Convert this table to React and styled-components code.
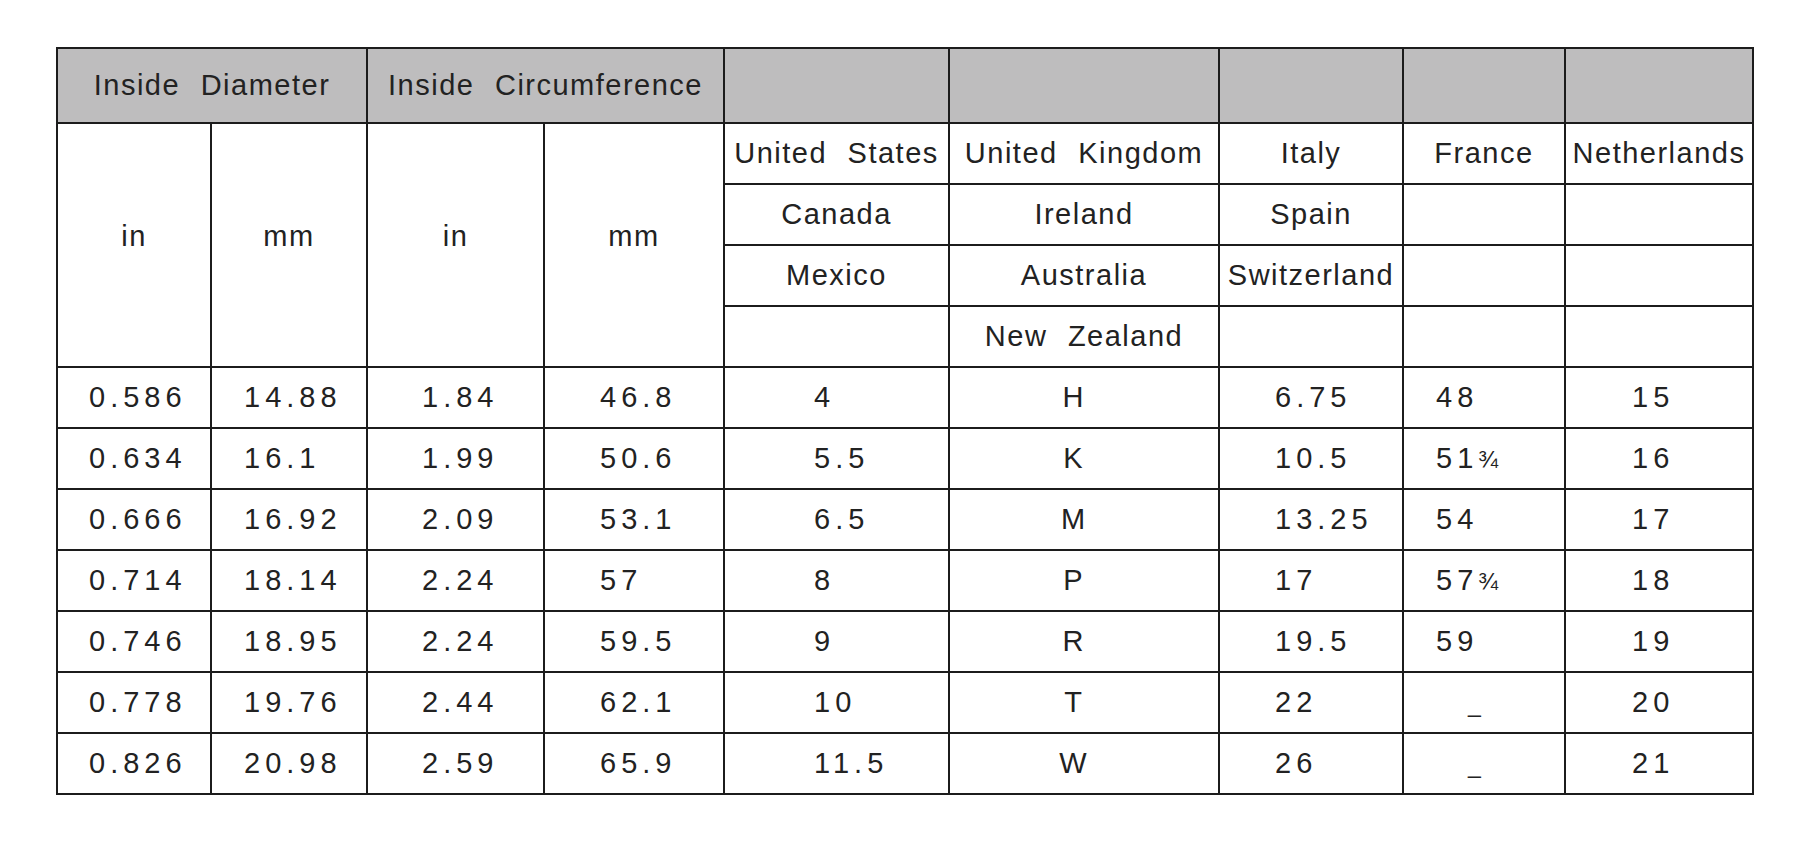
import React from "react";
import styled, { createGlobalStyle } from "styled-components";

const GlobalStyle = createGlobalStyle`
    html, body {
        margin: 0;
        padding: 0;
        background: #ffffff;
    }

    body {
        font-family: "Liberation Sans", Arial, sans-serif;
        color: #222;
    }
`

const Page = styled.div`
    padding: 47px 0 0 56px;
`

const SizeTable = styled.table`
    width: 1696px;
    table-layout: fixed;
    border-collapse: collapse;
    font-size: 29px;
    color: #222;

    td {
        border: 2px solid #1c1c1c;
        padding: 0;
        white-space: nowrap;
        overflow: hidden;
    }
`

const TopRow = styled.tr`
    height: 75px;
`

const Row = styled.tr`
    height: 61px;
`

const HeadCell = styled.td`
    background-color: #bebdbe;
    text-align: center;
    letter-spacing: 1.5px;
    word-spacing: 11px;
`

const UnitCell = styled.td`
    text-align: center;
    vertical-align: middle;
    padding-bottom: 18px !important;
    letter-spacing: 1.5px;
`

const RegionCell = styled.td`
    text-align: center;
    letter-spacing: 1.5px;
    word-spacing: 11px;
`

const DataCell = styled.td`
    text-align: ${(p) => (p.$center ? "center" : "left")};
    padding-left: ${(p) => (p.$center ? 0 : p.$pad)}px !important;
    padding-right: ${(p) => (p.$center ? p.$pad : 0)}px !important;
    letter-spacing: 5px;
`

const Frac = styled.span`
    font-size: 0.82em;
    letter-spacing: 0;
`

const Dash = styled.span`
    display: inline-block;
    margin-left: 32px;
    font-size: 23px;
    letter-spacing: 0;
`

const widths = [154, 156, 177, 180, 225, 270, 184, 162, 188];
const pads = [31, 32, 54, 55, 89, 17, 55, 32, 66];

const regions = [
    ["United States", "United Kingdom", "Italy", "France", "Netherlands"],
    ["Canada", "Ireland", "Spain", "", ""],
    ["Mexico", "Australia", "Switzerland", "", ""],
    ["", "New Zealand", "", "", ""],
];

const rows = [
    ["0.586", "14.88", "1.84", "46.8", "4", "H", "6.75", "48", "15"],
    ["0.634", "16.1", "1.99", "50.6", "5.5", "K", "10.5", "51¾", "16"],
    ["0.666", "16.92", "2.09", "53.1", "6.5", "M", "13.25", "54", "17"],
    ["0.714", "18.14", "2.24", "57", "8", "P", "17", "57¾", "18"],
    ["0.746", "18.95", "2.24", "59.5", "9", "R", "19.5", "59", "19"],
    ["0.778", "19.76", "2.44", "62.1", "10", "T", "22", "-", "20"],
    ["0.826", "20.98", "2.59", "65.9", "11.5", "W", "26", "-", "21"],
];

function renderValue(value) {
    if (value === "-") {
        return <Dash>_</Dash>;
    }
    if (value.endsWith("¾")) {
        return (
            <>
                {value.slice(0, -1)}
                <Frac>¾</Frac>
            </>
        );
    }
    return value;
}

export default function App() {
    return (
        <>
            <GlobalStyle />
            <Page>
                <SizeTable>
                    <colgroup>
                        {widths.map((w, i) => (
                            <col key={i} style={{ width: w }} />
                        ))}
                    </colgroup>
                    <tbody>
                        <TopRow>
                            <HeadCell colSpan={2}>Inside Diameter</HeadCell>
                            <HeadCell colSpan={2}>Inside Circumference</HeadCell>
                            <HeadCell />
                            <HeadCell />
                            <HeadCell />
                            <HeadCell />
                            <HeadCell />
                        </TopRow>
                        {regions.map((line, i) => (
                            <Row key={"r" + i}>
                                {i === 0 && (
                                    <>
                                        <UnitCell rowSpan={4}>in</UnitCell>
                                        <UnitCell rowSpan={4}>mm</UnitCell>
                                        <UnitCell rowSpan={4}>in</UnitCell>
                                        <UnitCell rowSpan={4}>mm</UnitCell>
                                    </>
                                )}
                                {line.map((name, j) => (
                                    <RegionCell key={j}>{name}</RegionCell>
                                ))}
                            </Row>
                        ))}
                        {rows.map((row, i) => (
                            <Row key={"d" + i}>
                                {row.map((value, j) => (
                                    <DataCell key={j} $pad={pads[j]} $center={j === 5}>
                                        {renderValue(value)}
                                    </DataCell>
                                ))}
                            </Row>
                        ))}
                    </tbody>
                </SizeTable>
            </Page>
        </>
    );
}
